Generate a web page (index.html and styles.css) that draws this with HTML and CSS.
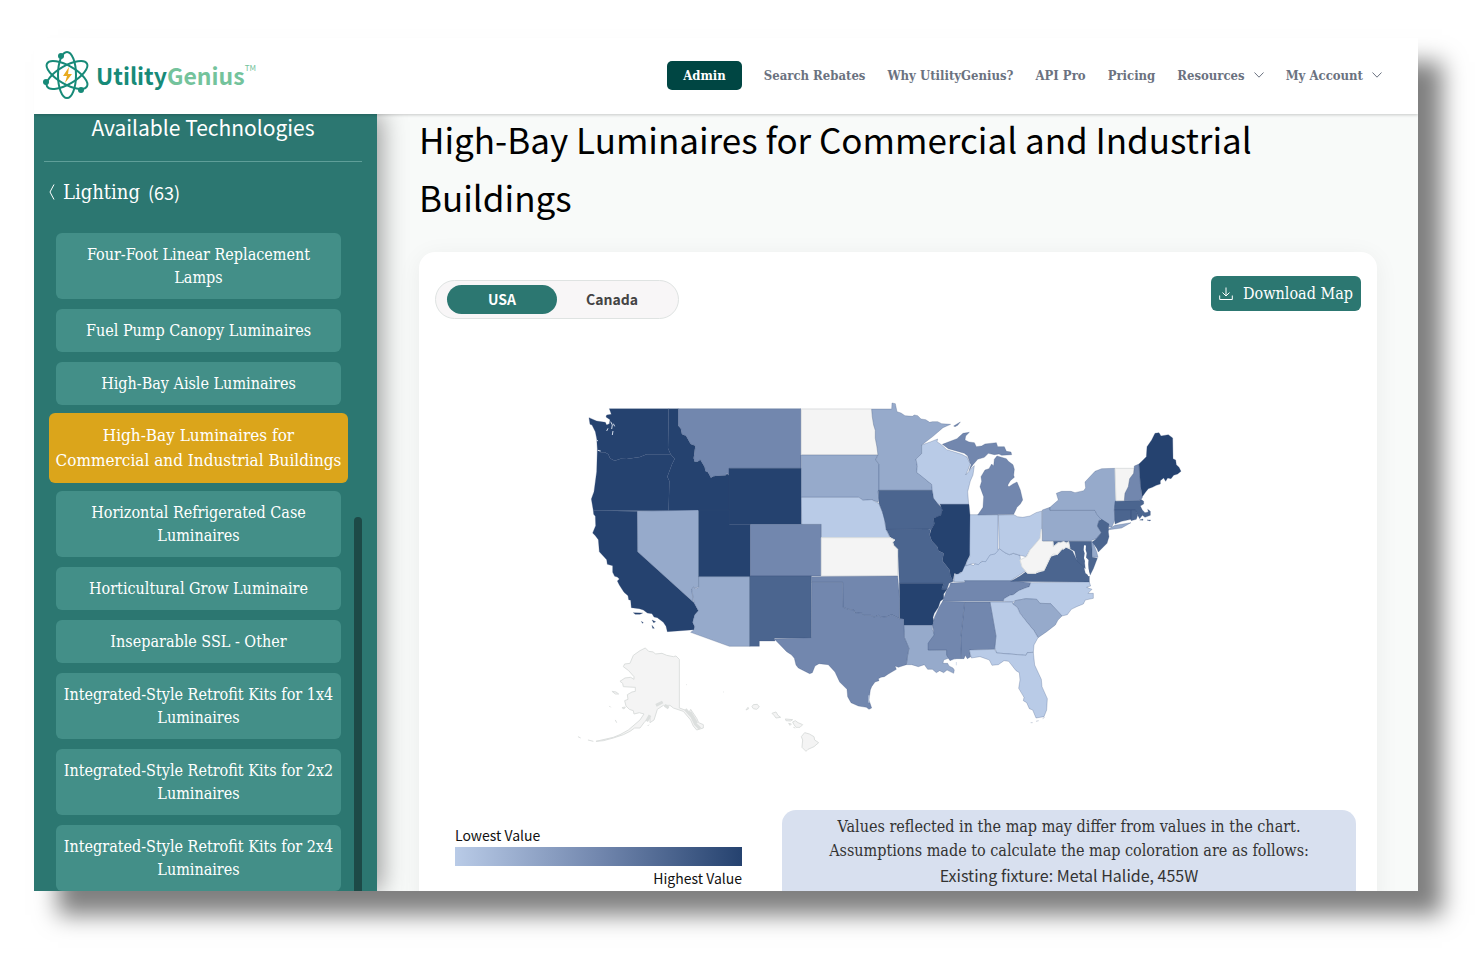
FILE: index.html
```html
<!DOCTYPE html>
<html lang="en">
<head>
<meta charset="UTF-8">
<meta name="viewport" content="width=device-width, initial-scale=1.0">
<title>UtilityGenius - High-Bay Luminaires</title>
<link rel="stylesheet" href="styles.css">
</head>
<body>

<div class="window">

  <header class="header">
    <a class="logo" href="#">
      <svg class="logo-mark" width="48" height="50" viewBox="0 0 48 50">
        <g fill="none" stroke="#178a78" stroke-width="2">
          <ellipse cx="24" cy="25" rx="9" ry="23"/>
          <ellipse cx="24" cy="25" rx="9" ry="23" transform="rotate(60 24 25)"/>
          <ellipse cx="24" cy="25" rx="9" ry="23" transform="rotate(-60 24 25)"/>
        </g>
        <g fill="#178a78">
          <circle cx="18" cy="6" r="3"/>
          <circle cx="3" cy="32" r="3"/>
          <circle cx="38" cy="40" r="3"/>
        </g>
        <path fill="#e8ab20" d="M26 17l-6 9h4l-2 7 7-9h-4z"/>
      </svg>
      <span class="logo-text">Utility<span class="logo-light">Genius</span></span><span class="logo-tm">TM</span>
    </a>
    <nav class="nav">
      <a class="nav-admin" href="#">Admin</a>
      <a class="nav-link" href="#">Search Rebates</a>
      <a class="nav-link" href="#">Why UtilityGenius?</a>
      <a class="nav-link" href="#">API Pro</a>
      <a class="nav-link" href="#">Pricing</a>
      <button class="nav-link" type="button">Resources
        <svg width="10" height="6" viewBox="0 0 10 6"><path d="M.5.5 5 5.2 9.500.5"/></svg>
      </button>
      <button class="nav-link" type="button">My Account
        <svg width="10" height="6" viewBox="0 0 10 6"><path d="M.5.5 5 5.2 9.500.5"/></svg>
      </button>
    </nav>
  </header>

  <div class="body">

    <aside class="sidebar">
      <h2 class="sidebar-title">Available Technologies</h2>
      <hr class="sidebar-line">
      <button class="back" type="button">
        <svg width="6" height="16" viewBox="0 0 6 16"><path d="M5 .5 1 8l4 7.500"/></svg>
        <span>Lighting</span> <span class="back-count">(63)</span>
      </button>
      <div class="tech-list">
        <button class="tech" type="button">Four-Foot Linear Replacement Lamps</button>
        <button class="tech" type="button">Fuel Pump Canopy Luminaires</button>
        <button class="tech" type="button">High-Bay Aisle Luminaires</button>
        <button class="tech active" type="button">High-Bay Luminaires for<br>Commercial and Industrial Buildings</button>
        <button class="tech" type="button">Horizontal Refrigerated Case Luminaires</button>
        <button class="tech" type="button">Horticultural Grow Luminaire</button>
        <button class="tech" type="button">Inseparable SSL - Other</button>
        <button class="tech" type="button">Integrated-Style Retrofit Kits for 1x4 Luminaires</button>
        <button class="tech" type="button">Integrated-Style Retrofit Kits for 2x2 Luminaires</button>
        <button class="tech" type="button">Integrated-Style Retrofit Kits for 2x4 Luminaires</button>
      </div>
      <div class="scroll-thumb"></div>
    </aside>

    <main class="main">
      <h1 class="title">High-Bay Luminaires for Commercial and Industrial Buildings</h1>

      <section class="card">
        <div class="toolbar">
          <div class="toggle">
            <button class="toggle-item selected" type="button">USA</button>
            <button class="toggle-item" type="button">Canada</button>
          </div>
          <button class="download" type="button">
            <svg width="14" height="14" viewBox="0 0 14 14"><path d="M7 .5v8.500M3.500 5.500 7 9l3.500-3.500M.7 8.500v4h12.600v-4"/></svg>
            Download Map
          </button>
        </div>

        <svg class="map" viewBox="435 340 926 450">
          <!-- north west -->
          <g transform="translate(580 395) scale(.33333)">
            <path class="s5" d="M88 41L266 41L264 160L272 178L200 178L180 186L140 192L122 191L104 197L90 190L85 178L74 172L62 172L52 162L50 130L46 110L36 90L30 88L27 68L50 78L76 82L80 90L88 86L90 74L78 66L80 60L94 58Z"/>
            <path class="s5" d="M52 162L62 172L74 172L85 178L90 190L104 197L122 191L140 192L180 186L200 178L272 178L284 192L276 208L262 245L268 258L266 347L40 347L34 312L42 290L46 260L50 230Z"/>
            <path class="s5" d="M266 41L295 41L295 92L302 100L306 118L318 122L332 147L346 152L341 190L344 200L352 200L361 194L374 216L376 228L384 232L393 248L400 244L415 242L437 241L441 236L447 241L447 347L266 347L268 258L262 245L276 208L284 192L272 178L264 160Z"/>
            <path class="s3" d="M295 41L663 41L663 220L447 220L447 241L441 234L437 241L415 242L400 244L393 248L384 232L376 228L374 216L361 194L352 200L344 200L341 190L346 152L332 147L318 122L306 118L302 100L295 92Z"/>
            <path class="s5" d="M447 220H664V388H447Z"/>
            <path class="inlet" d="M92 80l5 10-2 12M100 86l4 8M99 108l-2 12M84 100l-4 8M48 134l6 4M53 166l9 2"/>
          </g>

          <!-- south west -->
          <g transform="translate(580 505) scale(.33333)">
            <path class="s5" d="M40 17L172 19L173 140L342 293L355 317L344 330L338 352L344 365L342 374L262 380L258 364L250 352L232 338L222 336L216 326L202 324L190 315L178 311L154 308L152 286L146 284L144 272L132 262L118 240L112 228L118 222L112 216L104 214L98 202L98 182L82 178L80 164L58 140L55 104L46 92L38 84L42 74L47 62L46 34L41 28Z"/>
            <path class="s5" d="M160 323l28 1-8 4-14 0zM184 349l6 4-3 2zM216 345l11 5-6 3zM216 361l7 9-5 0z"/>
            <path class="s2" d="M172 19L266 17L356 15L356 245L348 249L340 247L335 252L340 291L173 140Z"/>
            <path class="s5" d="M356 15H448V58H511V215H356Z"/>
            <path class="s2" d="M356 215L509 215L509 424L448 424L332 382L342 374L344 365L338 352L344 330L355 317L342 293L335 252L340 247L348 251L356 247Z"/>
            <path class="s3" d="M511 58H724V213H511Z"/>
            <path class="s4" d="M509 213L694 213L694 400L583 400L585 408L538 408L538 424L509 424Z"/>
          </g>

          <!-- upper plains and lakes -->
          <g transform="translate(795 395) scale(.33333)">
            <path class="s0" d="M19 42L230 42L232 66L236 90L241 106L241 130L246 156L249 180L19 180Z"/>
            <path class="s2" d="M19 180L249 180L242 194L252 208L252 285L249 290L252 310L249 322L230 314L204 316L192 307L19 307Z"/>
            <path class="s1" d="M19 307L192 307L204 316L230 314L252 326L260 345L268 365L270 385L274 405L285 428L79 428L79 388L20 388Z"/>
            <path class="s2" d="M230 42L290 42L291 24L301 26L306 50L318 54L330 62L352 64L358 60L368 62L378 72L392 74L404 82L412 80L428 80L440 86L467 88L444 98L414 124L388 144L380 150L380 176L363 192L367 214L365 232L380 242L395 256L410 268L412 286L252 286L252 208L242 194L249 180L246 156L241 130L241 106L236 90L232 66Z"/>
            <path class="s4" d="M250 286L412 286L416 310L430 328L442 340L440 358L432 364L416 370L418 388L408 405L400 402L274 405L270 380L262 350L252 325Z"/>
            <path class="s1" d="M380 150L408 140L428 132L426 140L440 150L455 164L500 178L516 186L522 200L526 205L520 222L512 240L526 224L538 212L534 240L526 258L518 290L521 328L430 328L416 310L412 286L410 268L395 256L365 232L367 214L363 192L380 176Z"/>
          </g>

          <!-- central and gulf -->
          <g transform="translate(795 520) scale(.33333)">
            <path class="s5" d="M435 -47L522 -47L525 -15L525 105L517 120L511 135L508 152L494 158L490 164L478 160L474 182L466 168L464 150L442 122L446 100L430 92L428 82L410 62L404 45L408 30L418 12L416 -5L438 -15L442 -30Z"/>
            <path class="s4" d="M274 28L400 27L406 30L404 45L410 62L428 82L430 92L446 100L442 122L464 150L466 168L476 184L462 190L456 208L440 208L446 190L313 190L308 88L296 76L293 66L300 62L285 50Z"/>
            <path class="s5" d="M313 190L446 190L440 208L456 208L446 222L446 236L436 244L430 262L418 280L414 292L416 302L413 316L326 316L326 297L314 296L314 235Z"/>
            <path class="s2" d="M326 316L413 316L412 328L420 346L406 362L400 390L456 391L456 404L462 414L446 420L444 430L458 430L462 438L474 444L478 450L476 460L464 454L456 450L446 458L434 452L424 458L412 448L398 448L388 434L370 440L350 434L334 434L338 405L342 385L328 352Z"/>
            <path class="s0" d="M79 53L285 53L300 60L293 66L296 76L308 88L308 168L79 168Z"/>
            <path class="s3" d="M49 170L308 168L314 235L313 296L302 290L290 284L276 290L258 292L250 286L236 292L228 286L206 286L202 280L180 278L176 270L160 268L144 262L143 187L50 187Z"/>
            <path class="s3" d="M50 187L143 187L144 262L160 268L176 270L180 278L202 280L206 286L228 286L236 292L250 286L258 292L276 290L290 284L302 290L313 296L326 297L328 352L342 385L338 405L334 434L310 442L300 438L304 448L280 462L268 470L258 472L250 476L252 482L240 486L230 500L226 510L222 540L230 564L222 568L214 562L190 558L168 548L158 530L156 508L134 486L120 456L100 434L72 431L60 438L52 458L44 461L10 444L3 435L-2 415L-10 405L-25 395L-62 357L49 353Z"/>
            <path class="inlet" d="M222 526v22M470 420l14-4M484 426v10"/>
          </g>

          <!-- south east -->
          <g transform="translate(930 510) scale(.33333)">
            <path class="s1" d="M72 215L74 194L90 190L96 186L105 166L118 162L130 166L142 156L156 156L165 140L180 132L190 118L202 120L208 116L225 128L238 134L250 130L270 136L272 155L290 180L270 194L242 212L104 212L100 215Z"/>
            <path class="s3" d="M62 219L104 217L104 212L242 212L302 218L298 230L286 234L266 242L250 254L240 256L222 266L220 274L38 274L46 252L50 240L58 230Z"/>
            <path class="s1" d="M205 15L252 14L262 20L278 22L300 18L318 8L335 3L336 60L330 85L318 100L300 120L288 140L270 136L250 130L238 134L225 128L208 116Z"/>
            <path class="s4" d="M242 214L270 198L292 182L296 191L320 190L342 182L362 140L382 134L404 112L412 114L428 124L440 150L460 165L466 190L478 198L478 216Z"/>
            <path class="s4" d="M369 94L485 94L487 142L502 145L490 176L480 196L474 176L476 150L466 140L464 160L466 176L440 152L434 124L416 114L414 98L402 96L392 98L370 110Z"/>
            <path class="bay" d="M465 106l-1 14 3 10-2 14 6 18 2 16 4 20"/>
            <path class="s0" d="M334 58L339 60L339 94L369 94L370 110L384 98L392 98L402 94L408 100L416 95L420 116L408 112L400 118L396 116L382 134L370 132L362 140L342 182L322 184L318 190L292 190L276 170L270 150L290 140L300 120L318 100L330 85Z"/>
            <path class="s2" d="M485 96L492 94L492 106L500 125L504 142L487 142Z"/>
            <path class="s1" d="M302 218L478 216L482 228L470 232L486 238L474 250L490 250L490 265L466 270L460 282L440 290L424 298L412 314L396 318L362 281L330 280L320 268L288 266L256 272L248 276L220 274L222 266L240 256L250 254L266 242L286 234L298 230Z"/>
            <path class="s2" d="M248 282L256 272L288 266L320 268L330 280L362 281L396 318L384 330L376 345L350 365L324 383L318 372L312 362L292 338L270 310L262 292Z"/>
            <path class="s1" d="M180 276L248 276L248 282L262 292L270 310L292 338L312 362L324 383L312 405L310 427L292 428L288 436L200 429L194 412L198 378Z"/>
            <path class="s3" d="M104 276L180 276L198 378L194 418L118 420L122 440L112 446L106 436L102 446L94 446L92 385Z"/>
            <path class="s3" d="M38 274L104 276L92 385L94 446L72 446L60 452L50 436L50 420L-6 420L-6 400L12 375L8 345L14 320L28 290Z"/>
            <path class="s1" d="M118 420L194 418L200 429L288 436L292 428L310 427L314 465L334 508L336 530L352 566L350 600L342 620L318 624L308 600L298 596L290 578L280 572L282 562L266 535L270 510L268 488L258 482L236 454L222 452L205 464L186 466L178 450L150 440L124 444Z"/>
            <path class="s1" d="M338 626l6-4M318 634l8-2M302 638l6 0"/>
          </g>

          <!-- north east and michigan -->
          <g transform="translate(935 420) scale(.33333)">
            <path class="s1" d="M105 284L189 284L189 392L180 402L165 405L152 425L140 424L130 434L114 430L92 438L96 424L104 410L104 390Z"/>
            <path class="s3" d="M22 73L66 56L84 40L103 37L92 48L90 60L102 66L118 68L124 80L140 78L150 72L184 68L188 80L208 80L214 94L228 96L230 104L200 106L192 102L178 104L160 100L148 112L128 118L114 134L102 152L108 134L104 126L98 108L88 100L40 86Z"/>
            <path class="s3" d="M56 18L76 6L68 16L60 20Z"/>
            <path class="s3" d="M186 108L214 116L220 124L234 134L238 148L236 166L238 172L226 182L218 196L222 200L234 192L246 186L256 210L263 240L256 252L246 262L236 283L128 285L144 262L146 230L135 200L140 184L138 170L150 150L162 146L170 132L176 138L178 118Z"/>
            <path class="s2" d="M322 270L345 262L345 271L480 271L486 284L500 294L492 302L487 318L499 338L484 356L468 362L322 363Z"/>
            <path class="s2" d="M345 262L370 240L364 220L380 214L408 214L420 218L446 212L452 204L450 186L480 154L500 146L540 145L543 200L543 242L538 270L540 300L530 322L522 320L520 312L500 300L486 284L480 271L345 271Z"/>
            <path class="s2" d="M516 330L540 316L588 308L560 324Z"/>
            <path class="s4" d="M500 298L522 312L520 336L522 350L516 370L490 396L486 386L472 366L484 356L499 338L487 318L492 302Z"/>
            <path class="s0" d="M540 145L598 145L596 160L584 176L580 200L570 220L568 242L543 242Z"/>
            <path class="s3" d="M598 138L612 132L618 210L622 234L612 242L568 242L570 220L580 200L584 176L596 160Z"/>
            <path class="s5" d="M612 132L634 110L636 80L650 60L660 40L672 38L678 48L700 44L713 54L714 116L722 120L724 134L732 142L738 154L728 162L716 166L708 176L698 174L692 184L686 174L676 182L676 192L664 196L652 202L640 206L632 216L622 230L617 200Z"/>
            <path class="s4" d="M540 244L612 242L618 238L626 244L626 252L616 258L622 270L630 278L640 276L638 268L646 274L646 286L630 292L622 286L614 296L600 270L538 270Z"/>
            <path class="s4" d="M538 270L588 270L588 298L560 304L540 312ZM588 270L602 270L608 286L604 298L588 302ZM614 300l10-3 0 4zM636 300l11 0-2 3z"/>
          </g>

          <!-- alaska and hawaii -->
          <g class="islands" transform="translate(570 640) scale(.33333)">
            <path d="M226 24L236 34L250 36L256 42L276 40L290 46L310 50L318 48L328 58L328 204L345 210L356 220L362 208L380 235L386 248L400 254L400 264L380 270L370 258L362 240L340 214L310 204L300 196L280 196L262 208L252 240L240 248L240 232L225 244L210 264L194 264L180 274L160 284L130 294L100 302L78 304L130 292L150 284L175 270L210 240L222 222L208 218L192 222L190 212L178 208L168 198L164 182L174 178L172 164L186 156L196 154L196 142L160 140L158 130L150 124L165 114L182 112L192 118L192 110L176 92L160 80L164 72L180 70L190 46L210 32Z"/>
            <path class="coast" d="M258 196l20-10M346 208l20 22 10 22 14 14M360 216l20 34M240 226l-10 18M284 196l12 8"/>
            <path d="M126 154l12 2 8 6-10 0zM118 198l4 4M136 240l4 8M24 290l8 4M54 300l16 4M156 203l10-2-4 6zM233 258l4-4"/>
            <path d="M550 194l12-1 6 8-8 7-10-2-4-6zM528 210l6-8 2 4zM606 220l12-4 6 10 8 6-14 2-6-8zM646 237l22 2-6 4-14-1zM656 250l8 2-4 4zM668 246l8-4 8 6 14 6-8 8-12 0-6-8zM670 262l6 2M704 278l14 4 14 8 2 10 12 8-14 12-18 8-6 6-12-12 2-22-4-10z"/>
            <path d="M348 134h2M460 156h2"/>
          </g>
        </svg>

        <div class="card-foot">
          <div class="legend">
            <span>Lowest Value</span>
            <div class="legend-bar"></div>
            <span class="legend-high">Highest Value</span>
          </div>
          <div class="note">
            <p>Values reflected in the map may differ from values in the chart.</p>
            <p>Assumptions made to calculate the map coloration are as follows:</p>
            <p class="note-sans">Existing fixture: Metal Halide, 455W</p>
          </div>
        </div>
      </section>
    </main>

  </div>
</div>

</body>
</html>
```
FILE: styles.css
```css
* {
  box-sizing: border-box;
}

body {
  margin: 0;
  padding: 38px 64px 70px 34px;
  background: #fff;
  font-family: "DejaVu Serif Condensed", "DejaVu Serif", serif;
  font-size: 16px;
}

button {
  font: inherit;
  border: 0;
  cursor: pointer;
}

.window {
  display: flex;
  flex-direction: column;
  height: calc(100vh - 108px);
  overflow: hidden;
  box-shadow: 24px 24px 22px rgba(0, 0, 0, 0.5);
}

/* header */
.header {
  display: flex;
  align-items: center;
  justify-content: space-between;
  flex: none;
  height: 76px;
  padding: 0 36px 2px 9px;
  background: #fff;
  box-shadow: 0 1px 3px rgba(0, 0, 0, 0.2);
  position: relative;
  z-index: 2;
}

.logo {
  display: flex;
  align-items: center;
  text-decoration: none;
  font-family: "Noto Sans CJK SC", sans-serif;
}

.logo-text {
  margin-left: 5px;
  color: #178a78;
  font-size: 23px;
  font-weight: bold;
  line-height: 36px;
}

.logo-light {
  color: #74c39c;
}

.logo-tm {
  align-self: flex-start;
  margin-top: 10px;
  color: #74c39c;
  font-size: 8px;
  line-height: 16px;
}

.nav {
  display: flex;
  align-items: center;
  gap: 22px;
  font-size: 13px;
  font-weight: bold;
}

.nav-link {
  display: flex;
  align-items: center;
  gap: 9px;
  padding: 0;
  background: none;
  color: #6b7280;
  text-decoration: none;
  white-space: nowrap;
}

.nav-link svg {
  fill: none;
  stroke: #6b7280;
}

.nav-admin {
  padding: 0 16px;
  border-radius: 5px;
  background: #004643;
  color: #fff;
  line-height: 29px;
  text-decoration: none;
}

.body {
  display: flex;
  flex: 1;
  min-height: 0;
}

/* sidebar */
.sidebar {
  position: relative;
  z-index: 1;
  flex: none;
  width: 343px;
  padding: 0 15px 0 10px;
  background: #2c7771;
  color: #fff;
  box-shadow: 4px 0 24px rgba(0, 0, 0, 0.4);
}

.sidebar-title {
  margin: 0;
  font-family: "Noto Sans CJK SC", sans-serif;
  font-size: 21px;
  font-weight: normal;
  line-height: 26px;
  text-align: center;
}

.sidebar-line {
  margin: 21px 0 0;
  border: 0;
  border-top: 1px solid #5f9f99;
}

.back {
  display: flex;
  align-items: center;
  gap: 8px;
  margin-top: 16px;
  padding: 0 5px;
  background: none;
  color: #fff;
  font-size: 20px;
  line-height: 28px;
}

.back svg {
  fill: none;
  stroke: #fff;
}

.back-count {
  font-family: "Noto Sans CJK SC", sans-serif;
  font-size: 18px;
}

.tech-list {
  display: flex;
  flex-direction: column;
  gap: 10px;
  margin-top: 27px;
  padding: 0 21px 0 12px;
}

.tech {
  padding: 10px 6px;
  border-radius: 6px;
  background: #438f88;
  color: #fff;
  line-height: 23px;
}

.tech.active {
  margin: -2px -7px;
  padding: 10px 4px;
  background: #dba51b;
  font-size: 17px;
  line-height: 25px;
}

.scroll-thumb {
  position: absolute;
  top: 403px;
  right: 15px;
  bottom: 0;
  width: 8px;
  border-radius: 4px 4px 0 0;
  background: #1d4a47;
}

/* main */
.main {
  flex: 1;
  min-width: 0;
  padding: 0 41px 0 42px;
  background: #f8faf9;
}

.title {
  margin: -4px 0 26px;
  color: #000;
  font-family: "Noto Sans CJK SC", sans-serif;
  font-size: 35px;
  font-weight: normal;
  line-height: 58px;
}

.card {
  padding: 24px 16px;
  border-radius: 16px;
  background: #fff;
  box-shadow: 0 4px 24px rgba(0, 0, 0, 0.06);
}

.toolbar {
  display: flex;
  align-items: flex-start;
  justify-content: space-between;
}

.toggle {
  display: flex;
  margin-top: 4px;
  padding: 4px 11px;
  border: 1px solid #dfe3e2;
  border-radius: 20px;
  background: #f8f6f7;
}

.toggle-item {
  width: 110px;
  border-radius: 15px;
  background: none;
  color: #444;
  font-family: "Noto Sans CJK SC", sans-serif;
  font-size: 14px;
  font-weight: bold;
  line-height: 29px;
  padding: 0;
}

.toggle-item.selected {
  background: #2c7771;
  color: #fff;
}

.download {
  display: flex;
  align-items: center;
  gap: 10px;
  padding: 0 8px;
  border-radius: 6px;
  background: #2c7771;
  color: #fff;
  line-height: 35px;
}

.download svg {
  fill: none;
  stroke: #fff;
}

.map {
  display: block;
  width: 100%;
  margin-top: 21px;
}

.map path {
  stroke: rgba(50, 75, 120, 0.25);
  stroke-width: 1;
  stroke-linejoin: round;
  vector-effect: non-scaling-stroke;
}

.map .s0 { fill: #f4f4f4; stroke: #dcdfe0; }
.map .s1 { fill: #b9cbe7; }
.map .s2 { fill: #96aacb; }
.map .s3 { fill: #7287ae; }
.map .s4 { fill: #4b658f; }
.map .s5 { fill: #25426f; }

.map .inlet {
  fill: none;
  stroke: #d5deec;
}

.map .bay {
  fill: none;
  stroke: #fff;
  stroke-width: 2;
}

.map .islands path {
  fill: #f4f4f4;
  stroke: #dcdfde;
}

.map .islands .coast {
  fill: none;
  stroke-width: 3;
}

.card-foot {
  display: flex;
  align-items: flex-start;
  gap: 40px;
  margin-top: 20px;
  padding: 0 5px 0 20px;
}

.legend {
  display: flex;
  flex-direction: column;
  width: 287px;
  margin-top: 13px;
  color: #111;
  font-family: "Noto Sans CJK SC", sans-serif;
  font-size: 14px;
  line-height: 24px;
}

.legend-bar {
  height: 19px;
  background: linear-gradient(to right, #b9cbe7, #7287ae 50%, #25426f);
}

.legend-high {
  text-align: right;
}

.note {
  flex: 1;
  padding: 5px 16px;
  border-radius: 14px 14px 0 0;
  background: #d8e0ef;
  color: #333;
  line-height: 24px;
  text-align: center;
}

.note p {
  margin: 0;
}

.note-sans {
  font-family: "Noto Sans CJK SC", sans-serif;
}
```
